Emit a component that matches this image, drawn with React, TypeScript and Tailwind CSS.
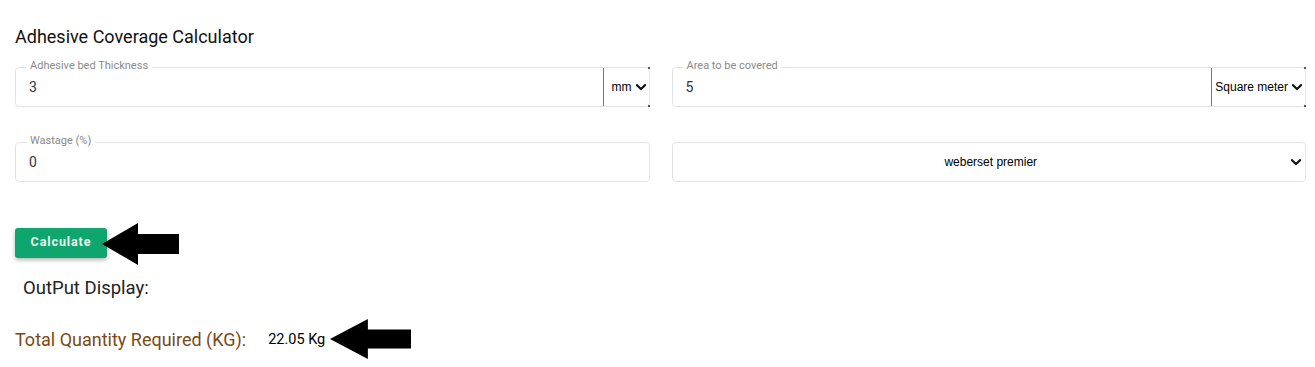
import React from 'react';

function Chevron({ className = '' }: { className?: string }) {
  return (
    <svg viewBox="0 0 10 7" className={className} width="10" height="7">
      <path d="M1 1.2 L5 5 L9 1.2" fill="none" stroke="#111" strokeWidth="2.2" strokeLinecap="square" />
    </svg>
  );
}

function LeftArrow({ width, height }: { width: number; height: number }) {
  return (
    <svg width={width} height={height} viewBox="0 0 77 42" preserveAspectRatio="none">
      <polygon points="0,21 36,0 36,11 77,11 77,31 36,31 36,42" fill="#000" />
    </svg>
  );
}

interface FieldProps {
  label?: string;
  value: string;
  unit?: string;
  unitClass?: string;
}

function OutlinedField({ label, value, unit, unitClass }: FieldProps) {
  return (
    <div className="relative h-10 rounded border border-[#e3e3e3] bg-white">
      {label && (
        <span className="absolute -top-[9px] left-[10px] bg-white px-[4px] text-[11px] leading-[14px] text-[#8a8a8a]">
          {label}
        </span>
      )}
      <div className="flex h-full items-center">
        <span className="flex-1 pl-[13px] text-[14px] text-[#333]">{value}</span>
        {unit && (
          <div
            className={`relative flex h-full items-center justify-end whitespace-nowrap border-l border-[#767676] pr-[3px] text-[12px] text-black ${unitClass}`}
            style={{ fontFamily: '"Liberation Sans", Arial, sans-serif' }}
          >
            <span>{unit}</span>
            <Chevron className="ml-[4px]" />
            <span className="absolute -right-px -top-px h-[2px] w-[2px] bg-[#555]" />
            <span className="absolute -bottom-px -right-px h-[2px] w-[2px] bg-[#555]" />
          </div>
        )}
      </div>
    </div>
  );
}

export default function App() {
  return (
    <div className="h-[367px] w-[1315px] bg-white pl-[15px]" style={{ fontFamily: 'Roboto, "Noto Sans", sans-serif' }}>
      <h2 className="pt-[26px] text-[18px] leading-[22px] text-[#111]">Adhesive Coverage Calculator</h2>

      <div className="mt-[19px] grid w-[1291px] grid-cols-2 gap-x-[22px] gap-y-[35px]">
        <OutlinedField label="Adhesive bed Thickness" value="3" unit="mm" unitClass="w-[46px]" />
        <OutlinedField label="Area to be covered" value="5" unit="Square meter" unitClass="w-[94px]" />
        <OutlinedField label="Wastage (%)" value="0" />
        <div
          className="relative flex h-10 items-center justify-center rounded-sm border border-[#e3e3e3] bg-white text-[12px] text-black"
          style={{ fontFamily: '"Liberation Sans", Arial, sans-serif' }}
        >
          <span className="pl-[4px]">weberset premier</span>
          <Chevron className="absolute right-[4px] top-[16px]" />
        </div>
      </div>

      <div className="mt-[38px] flex items-center">
        <button className="h-[30px] w-[92px] rounded-[3px] bg-[#0fa56e] text-[12.5px] font-bold tracking-[0.9px] text-[#eef6f0] shadow-[0_2px_4px_rgba(0,0,0,0.3)]">
          Calculate
        </button>
        <div className="-ml-[5px] mt-[3px]">
          <LeftArrow width={77} height={42} />
        </div>
      </div>

      <p className="mt-[12px] pl-[8px] text-[18.5px] leading-[22px] text-[#222]">OutPut Display:</p>

      <div className="mt-[22px] flex items-center">
        <span className="text-[18px] leading-[22px] text-[#7b4a14]">Total Quantity Required (KG):</span>
        <span className="ml-[22px] text-[14.5px] text-black">22.05 Kg</span>
        <div className="ml-[5px] -mt-[2px]">
          <LeftArrow width={81} height={40} />
        </div>
      </div>
    </div>
  );
}
